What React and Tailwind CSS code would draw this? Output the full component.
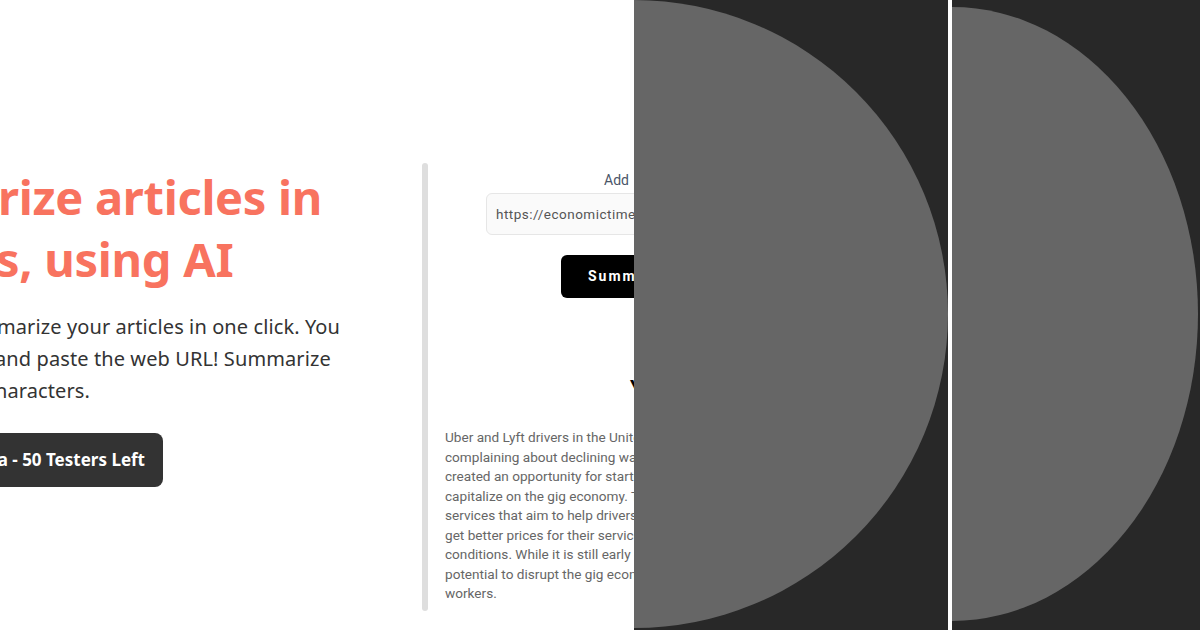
export default function App() {
  const summary = [
    "Uber and Lyft drivers in the United States have been",
    "complaining about declining wages for years, which has",
    "created an opportunity for startups looking to",
    "capitalize on the gig economy. These startups offer",
    "services that aim to help drivers earn more money,",
    "get better prices for their services and better working",
    "conditions. While it is still early days, they have the",
    "potential to disrupt the gig economy and help its",
    "workers.",
  ];
  return (
    <div className="flex w-[1200px] h-[630px] overflow-hidden bg-white">
      <div className="w-[634px] h-[630px] shrink-0 overflow-hidden flex bg-white">
        <div className="w-[422px] shrink-0 flex flex-col pt-[166px] overflow-hidden">
          <div
            className="text-[47px] leading-[62px] font-bold text-[#f8735f] whitespace-nowrap tracking-[-0.3px]"
            style={{ fontFamily: '"Noto Sans", sans-serif' }}
          >
            <div className="-ml-[2px]">rize articles in</div>
            <div className="-ml-[4px]">s, using AI</div>
          </div>
          <div
            className="mt-[21px] text-[20px] leading-[32px] text-[#333333] whitespace-nowrap tracking-[0.1px]"
            style={{ fontFamily: '"Noto Sans", sans-serif' }}
          >
            <div className="-ml-[3px]">marize your articles in one click. You</div>
            <div className="-ml-[5px]">and paste the web URL! Summarize</div>
            <div className="-ml-[5px]">haracters.</div>
          </div>
          <div className="mt-[26px] w-[163px] h-[54px] rounded-r-lg bg-[#333333] flex items-center justify-end pr-[18px]">
            <span
              className="text-[17px] font-bold text-white whitespace-nowrap"
              style={{ fontFamily: '"Noto Sans", sans-serif' }}
            >
              a - 50 Testers Left
            </span>
          </div>
        </div>
        <div className="flex shrink-0 w-[212px]">
          <div className="w-[6px] h-[448px] mt-[163px] rounded-full bg-[#dedede] shrink-0" />
          <div
            className="flex flex-col w-[206px] shrink-0 overflow-hidden"
            style={{ fontFamily: '"Roboto", sans-serif' }}
          >
            <div className="mt-[170px] ml-[176px] text-[14px] leading-[20px] text-[#4a5568] whitespace-nowrap [word-spacing:8px]">
              Add your article URL
            </div>
            <div className="mt-[3px] ml-[58px] h-[42px] w-[300px] shrink-0 rounded-md border border-[#e6e6e6] bg-[#fafafa] flex items-center pl-[9px]">
              <span className="text-[13.5px] text-[#555555] tracking-[0.5px] whitespace-nowrap">
                https://economictimes.indiatimes.com/tech
              </span>
            </div>
            <div className="mt-[20px] ml-[133px] h-[43px] w-[160px] shrink-0 rounded-md bg-black flex items-center pl-[27px]">
              <span className="text-[14px] font-bold text-white tracking-[2px] whitespace-nowrap">
                Summarize
              </span>
            </div>
            <div className="mt-[76px] ml-[202px] text-[20px] leading-[28px] font-bold text-black whitespace-nowrap">
              Your Summary
            </div>
            <div className="mt-[26px] ml-[17px] text-[13.6px] leading-[19.5px] text-[#666666] whitespace-nowrap">
              {summary.map((l, i) => (
                <div key={i}>{l}</div>
              ))}
            </div>
          </div>
        </div>
      </div>
      <div className="w-[314px] h-[630px] shrink-0 bg-[#282828]">
        <svg width="314" height="630" viewBox="0 0 314 630">
          <circle cx="0" cy="314" r="314" fill="#666666" />
        </svg>
      </div>
      <div className="w-[4px] h-[630px] shrink-0 bg-white" />
      <div className="flex-1 h-[630px] bg-[#282828]">
        <svg width="248" height="630" viewBox="0 0 248 630">
          <ellipse cx="0" cy="314" rx="246" ry="307" fill="#666666" />
        </svg>
      </div>
    </div>
  );
}
